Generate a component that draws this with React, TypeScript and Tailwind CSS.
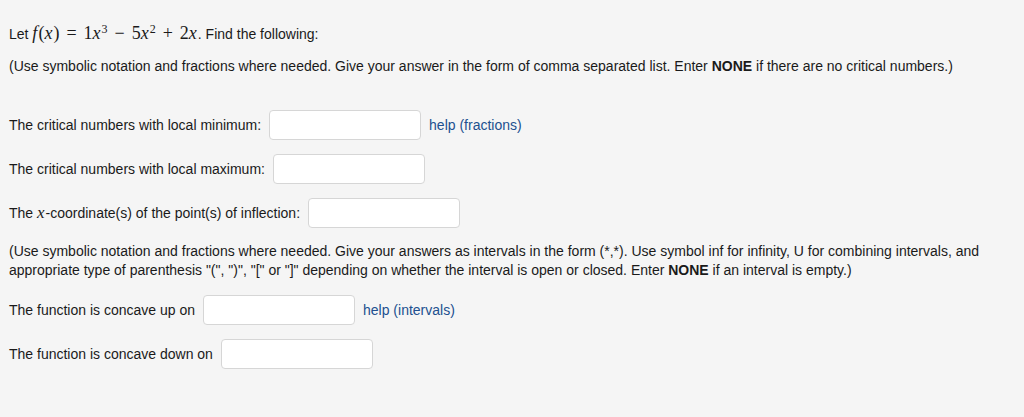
function MathVar({ children }: { children: React.ReactNode }) {
  return <span className="mr-[1px] italic" style={{ fontFamily: '"Liberation Serif", serif' }}>{children}</span>;
}

function Op({ children }: { children: React.ReactNode }) {
  return <span className="mx-[7px]">{children}</span>;
}

function Answer({ className = "" }: { className?: string }) {
  return (
    <input
      type="text"
      className={`h-[30px] w-[152px] rounded-[4px] border border-[#d6d6d6] bg-white px-2 text-[14px] outline-none ${className}`}
    />
  );
}

function Row({ label, help }: { label: React.ReactNode; help?: string }) {
  return (
    <div className="flex h-[30px] items-center">
      <span className="mr-[8px]">{label}</span>
      <Answer />
      {help && <a className="ml-[8px] text-[#21508f]">{help}</a>}
    </div>
  );
}

export default function App() {
  const serif = { fontFamily: '"Liberation Serif", serif' };

  return (
    <div
      className="h-[417px] w-full bg-[#f5f5f5] pl-[9px] pt-[23px] text-[14px] text-[#1a1a1a]"
      style={{ fontFamily: '"Liberation Sans", Arial, sans-serif' }}
    >
      <p className="h-[20px] leading-[20px]">
        Let{" "}
        <span className="text-[18px]" style={serif}>
          <MathVar>f</MathVar>(<MathVar>x</MathVar>)<Op>=</Op>1<MathVar>x</MathVar>
          <sup className="text-[12px]">3</sup>
          <Op>−</Op>5<MathVar>x</MathVar>
          <sup className="text-[12px]">2</sup>
          <Op>+</Op>2<MathVar>x</MathVar>
        </span>
        . Find the following:
      </p>

      <p className="mt-[14px] leading-[19px]">
        (Use symbolic notation and fractions where needed. Give your answer in the form of comma separated list. Enter{" "}
        <b>NONE</b> if there are no critical numbers.)
      </p>

      <div className="mt-[34px] flex flex-col gap-[14px]">
        <Row label="The critical numbers with local minimum:" help="help (fractions)" />
        <Row label="The critical numbers with local maximum:" />
        <Row
          label={
            <>
              The <span className="text-[17px]"><MathVar>x</MathVar></span>-coordinate(s) of the point(s) of inflection:
            </>
          }
        />
      </div>

      <p className="mt-[14px] pr-[20px] leading-[19px]">
        (Use symbolic notation and fractions where needed. Give your answers as intervals in the form (*,*). Use symbol inf
        for infinity, U for combining intervals, and appropriate type of parenthesis "(", ")", "[" or "]" depending on
        whether the interval is open or closed. Enter <b>NONE</b> if an interval is empty.)
      </p>

      <div className="mt-[15px] flex flex-col gap-[14px]">
        <Row label="The function is concave up on" help="help (intervals)" />
        <Row label="The function is concave down on" />
      </div>
    </div>
  );
}
